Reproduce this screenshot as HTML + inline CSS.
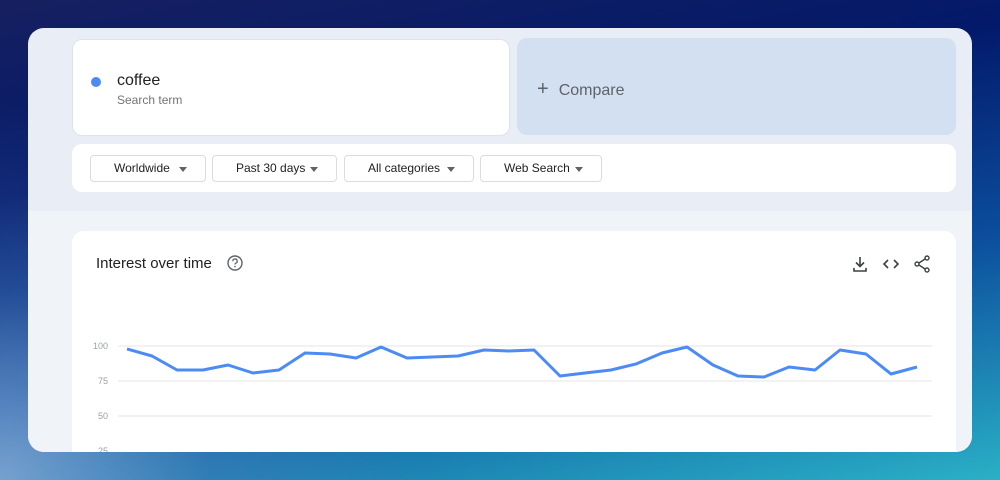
<!DOCTYPE html>
<html><head><style>
*{margin:0;padding:0;box-sizing:border-box}
body{width:1000px;height:480px;overflow:hidden;font-family:"Liberation Sans",sans-serif;background:linear-gradient(170deg,#162060 0%,#03196a 30%,#0b4c9c 62%,#2ab0c6 100%);position:relative}
.bgl{position:absolute;inset:0;background:radial-gradient(ellipse 420px 380px at 0% 100%,rgba(150,180,220,.75) 0%,rgba(100,140,200,.3) 50%,rgba(0,0,0,0) 100%)}
.main{position:absolute;left:28px;top:28px;width:944px;height:424px;border-radius:16px;background:#e9eef6;overflow:hidden}
.lower{position:absolute;left:0;top:183px;width:944px;height:260px;background:#f0f4f9}
.term{position:absolute;left:44px;top:11px;width:438px;height:97px;background:#fff;border-radius:10px;border:1px solid #dde3ec}
.dot{position:absolute;left:18px;top:37px;width:10px;height:10px;border-radius:50%;background:#4c8bf5}
.t1{position:absolute;left:44px;top:32px;font-size:16px;color:#202124}
.t2{position:absolute;left:44px;top:53px;font-size:12px;color:#70757a}
.cmp{position:absolute;left:489px;top:10px;width:439px;height:97px;background:#d3e0f2;border-radius:10px}
.cmp span{position:absolute;left:20px;top:40px;font-size:16px;color:#5f6368}
.filters{position:absolute;left:44px;top:116px;width:884px;height:48px;background:#fff;border-radius:10px}
.f{position:absolute;top:11px;height:27px;border:1px solid #dadce0;border-radius:4px;font-size:12px;color:#202124;line-height:25px;padding-left:23px}
.f:after{content:"";position:absolute;right:18px;top:11px;border:4px solid transparent;border-top:5px solid #5f6368;border-bottom:0}
.chart{position:absolute;left:44px;top:203px;width:884px;height:260px;background:#fff;border-radius:12px}
</style></head><body><div class="bgl"></div>
<div class="main">
<div class="lower"></div>
<div class="term"><div class="dot"></div><div class="t1">coffee</div><div class="t2">Search term</div></div>
<div class="cmp"><span><span style="position:static;font-size:20px;font-weight:300;margin-right:10px">+</span>Compare</span></div>
<div class="filters">
<div class="f" style="left:18px;width:116px">Worldwide</div>
<div class="f" style="left:140px;width:125px">Past 30 days</div>
<div class="f" style="left:272px;width:130px">All categories</div>
<div class="f" style="left:408px;width:122px">Web Search</div>
</div>
<div class="chart">
<div style="position:absolute;left:24px;top:24px;font-size:15px;color:#202124">Interest over time</div>
<svg style="position:absolute;left:154px;top:23px" width="18" height="18" viewBox="0 0 18 18"><circle cx="9" cy="9" r="7" fill="none" stroke="#5f6368" stroke-width="1.4"/><path d="M6.8 7.2a2.2 2.2 0 1 1 3 2c-.6.3-.8.7-.8 1.3" fill="none" stroke="#5f6368" stroke-width="1.3"/><circle cx="9" cy="12.6" r=".8" fill="#5f6368"/></svg>
<svg style="position:absolute;left:780px;top:24px" width="80" height="18" viewBox="0 0 80 18"><path d="M8 2v9M4 7.5l4 4 4-4M2 13v3h12v-3" fill="none" stroke="#3c4043" stroke-width="1.6"/><path d="M36 5l-4 4 4 4M42 5l4 4-4 4" fill="none" stroke="#3c4043" stroke-width="1.6"/><circle cx="75" cy="3" r="2" fill="none" stroke="#3c4043" stroke-width="1.4"/><circle cx="65" cy="9" r="2" fill="none" stroke="#3c4043" stroke-width="1.4"/><circle cx="75" cy="15" r="2" fill="none" stroke="#3c4043" stroke-width="1.4"/><path d="M67 8l6-4M67 10l6 4" stroke="#3c4043" stroke-width="1.4"/></svg>
</div>
</div>
<svg style="position:absolute;left:0;top:0" width="1000" height="452" viewBox="0 0 1000 452">
<g stroke="#e6e6e6" stroke-width="1"><line x1="118" y1="346" x2="932" y2="346"/><line x1="118" y1="381" x2="932" y2="381"/><line x1="118" y1="416" x2="932" y2="416"/></g>
<g font-size="9" fill="#9aa0a6" font-family="Liberation Sans" text-anchor="end"><text x="108" y="349">100</text><text x="108" y="384">75</text><text x="108" y="419">50</text><text x="108" y="454">25</text></g>
<polyline fill="none" stroke="#4c8bf5" stroke-width="3" stroke-linejoin="round" points="127,349 152,356 177,370 203,370 228,365 253,373 279,370 305,353 330,354 356,358 381,347 407,358 432,357 458,356 484,350 509,351 534,350 560,376 585,373 611,370 636,364 662,353 687,347 713,365 738,376 764,377 789,367 815,370 840,350 866,354 891,374 917,367"/>
</svg>
</body></html>
